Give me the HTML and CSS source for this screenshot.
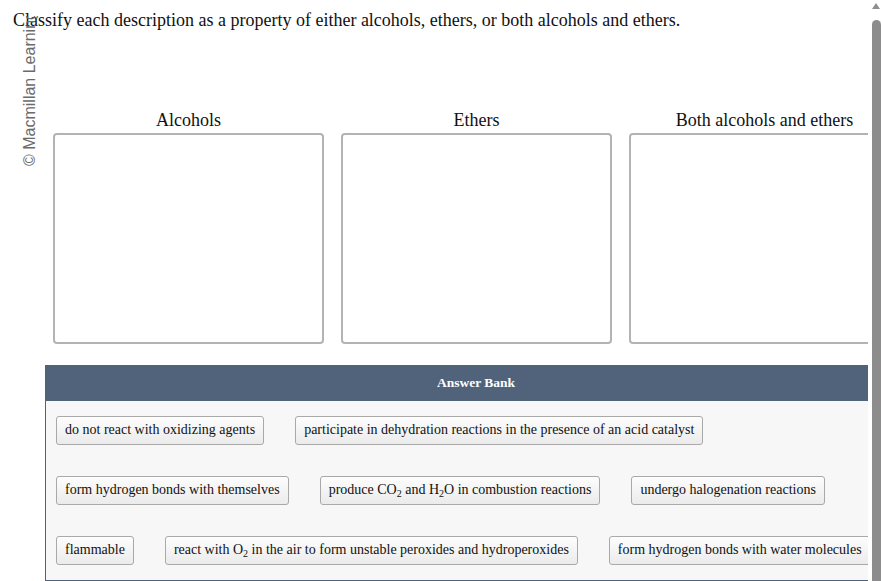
FILE: index.html
```html
<!DOCTYPE html>
<html lang="en">
<head>
  <meta charset="UTF-8">
  <title>Classify alcohols and ethers</title>
  <link rel="stylesheet" href="styles.css">
</head>
<body>
  <p class="question">Classify each description as a property of either alcohols, ethers, or both alcohols and ethers.</p>

  <div class="watermark"><span>&copy; Macmillan Learning</span></div>

  <div class="activity">
    <div class="inner">
      <div class="bins">
        <div class="bin">
          <div class="bin-title">Alcohols</div>
          <div class="drop"></div>
        </div>
        <div class="bin">
          <div class="bin-title">Ethers</div>
          <div class="drop"></div>
        </div>
        <div class="bin">
          <div class="bin-title">Both alcohols and ethers</div>
          <div class="drop"></div>
        </div>
      </div>

      <div class="bank">
        <div class="bank-header">Answer Bank</div>
        <div class="bank-body">
          <div class="row">
            <div class="chip">do not react with oxidizing agents</div>
            <div class="chip">participate in dehydration reactions in the presence of an acid catalyst</div>
          </div>
          <div class="row">
            <div class="chip">form hydrogen bonds with themselves</div>
            <div class="chip">produce CO<sub>2</sub> and H<sub>2</sub>O in combustion reactions</div>
            <div class="chip">undergo halogenation reactions</div>
          </div>
          <div class="row">
            <div class="chip">flammable</div>
            <div class="chip">react with O<sub>2</sub> in the air to form unstable peroxides and hydroperoxides</div>
            <div class="chip">form hydrogen bonds with water molecules</div>
          </div>
        </div>
      </div>
    </div>
  </div>

  <!-- fake scrollbar -->
  <div class="scrollbar">
    <div class="arrow"></div>
    <div class="thumb"></div>
  </div>
</body>
</html>
```

FILE: styles.css
```css
body {
  margin: 0;
  width: 881px;
  height: 581px;
  overflow: hidden;
  position: relative;
  background: #fff;
  font-family: "Liberation Serif", "Times New Roman", serif;
  color: #111;
}

.question {
  margin: 0;
  padding: 9px 0 0 13px;
  font-size: 18px;
  line-height: 22px;
}

/* rotated copyright at the left */
.watermark {
  position: absolute;
  left: 20px;
  top: 16px;
  width: 19px;
  height: 152px;
  overflow: hidden;
}

.watermark span {
  position: absolute;
  left: 0;
  top: 150px;
  transform-origin: 0 0;
  transform: rotate(-90deg);
  white-space: nowrap;
  font-family: "Liberation Sans", Arial, sans-serif;
  font-size: 16px;
  line-height: 19px;
  color: #6b6b6b;
}

.activity {
  margin: 78px 0 0 45px;
  width: 823px;
  overflow: hidden;
}

.inner {
  width: 862px;
}

.bins {
  display: flex;
  gap: 17px;
  padding: 0 7px 0 8px;
}

.bin {
  width: 271px;
}

.bin-title {
  text-align: center;
  font-size: 18px;
  line-height: 22px;
  margin-bottom: 2px;
}

.drop {
  height: 207px;
  border: 2px solid #b3b3b3;
  border-radius: 4px;
}

.bank {
  margin-top: 21px;
}

.bank-header {
  background: #51637a;
  color: #fff;
  font-weight: bold;
  font-size: 13.5px;
  height: 36px;
  line-height: 36px;
  text-align: center;
}

.bank-body {
  background: #f7f7f7;
  border-left: 1px solid #51637a;
  border-bottom: 1px solid #51637a;
  padding: 15px 10px 15px 10px;
  display: flex;
  flex-direction: column;
  gap: 31px;
}

.row {
  display: flex;
  gap: 31px;
}

.chip {
  height: 27px;
  line-height: 25px;
  padding: 0 8px;
  font-size: 14px;
  border: 1px solid #a9a9a9;
  border-radius: 3px;
  background: linear-gradient(#fdfdfd, #ebebeb);
  white-space: nowrap;
}

.chip sub {
  font-size: 10px;
  line-height: 0;
  vertical-align: -3px;
}

.scrollbar {
  position: absolute;
  right: 0;
  top: 0;
  width: 10px;
  height: 581px;
}

.arrow {
  margin: 3px 0 0 1px;
  width: 0;
  height: 0;
  border-left: 4px solid transparent;
  border-right: 4px solid transparent;
  border-bottom: 6px solid #8f8f8f;
}

.thumb {
  margin: 11px 0 0 1px;
  height: 580px;
  background: #8c8c8c;
  border-radius: 5px 5px 0 0;
}
```
